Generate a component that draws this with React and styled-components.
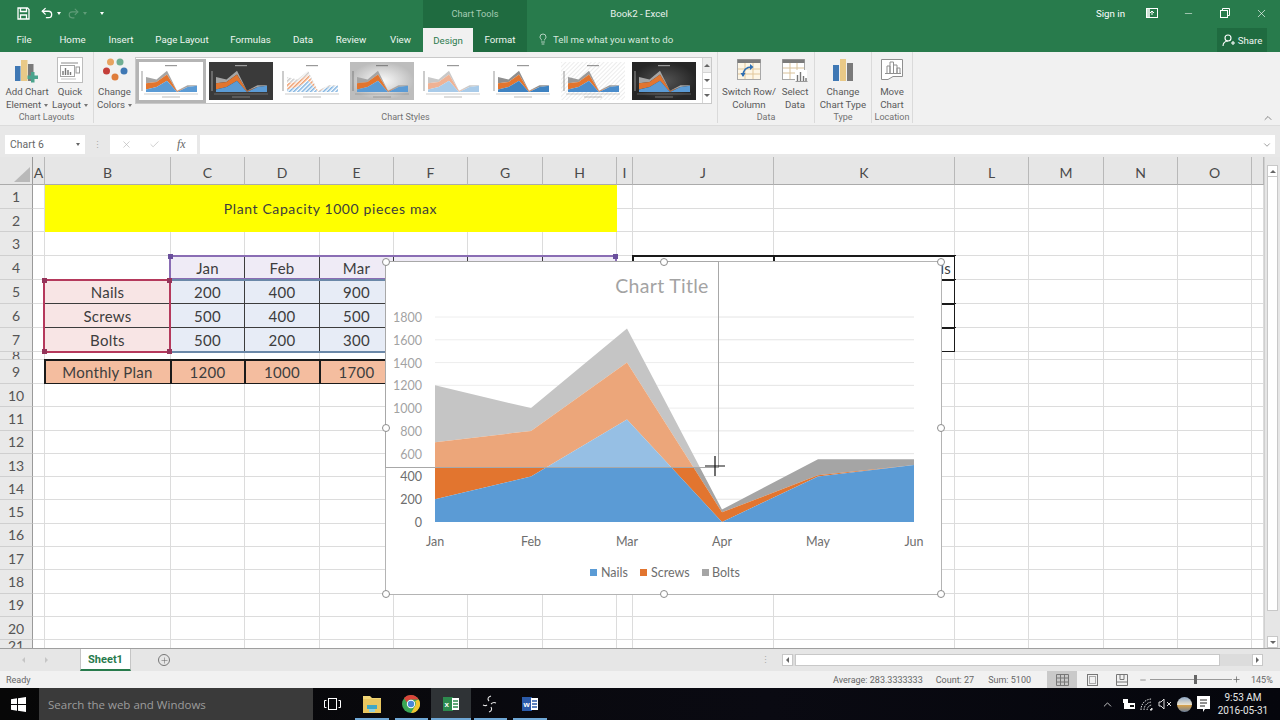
import React from "react";
import styled, { createGlobalStyle } from "styled-components";
import { Undo2, Redo2, Lightbulb, X, Check, Plus, ChevronUp, ChevronDown, Minus } from "lucide-react";

const UI = `Roboto, "Liberation Sans", sans-serif`;
const CELL = `Lato, "Liberation Sans", sans-serif`;

const COLS = [33, 12, 126, 74, 75, 74, 74, 75, 74, 16, 141, 181, 74, 75, 74, 74, 12];
const COL_NAMES = ["A", "B", "C", "D", "E", "F", "G", "H", "I", "J", "K", "L", "M", "N", "O", ""];
const ROWS = [24, 23, 24, 24, 24, 24, 24, 8, 24, 23.3, 23.3, 23.3, 23.3, 23.3, 23.3, 23.3, 23.3, 23.3, 23.3, 23.3];

const PINK = "#f8e5e5";
const BLUE = "#e7ecf6";
const LILAC = "#efebf6";
const PEACH = "#f4bd9f";

// cellen met inhoud, de rest is leeg
const CELLS = {
  C4: { text: "Jan", bg: LILAC, line: "thin" },
  D4: { text: "Feb", bg: LILAC, line: "thin" },
  E4: { text: "Mar", bg: LILAC, line: "thin" },
  F4: { bg: LILAC, line: "thin" },
  G4: { bg: LILAC, line: "thin" },
  H4: { bg: LILAC, line: "thin" },
  B5: { text: "Nails", bg: PINK, line: "thin" },
  B6: { text: "Screws", bg: PINK, line: "thin" },
  B7: { text: "Bolts", bg: PINK, line: "thin" },
  C5: { text: "200", bg: BLUE, line: "thin" },
  D5: { text: "400", bg: BLUE, line: "thin" },
  E5: { text: "900", bg: BLUE, line: "thin" },
  C6: { text: "500", bg: BLUE, line: "thin" },
  D6: { text: "400", bg: BLUE, line: "thin" },
  E6: { text: "500", bg: BLUE, line: "thin" },
  C7: { text: "500", bg: BLUE, line: "thin" },
  D7: { text: "200", bg: BLUE, line: "thin" },
  E7: { text: "300", bg: BLUE, line: "thin" },
  B9: { text: "Monthly Plan", bg: PEACH, line: "thick" },
  C9: { text: "1200", bg: PEACH, line: "thick" },
  D9: { text: "1000", bg: PEACH, line: "thick" },
  E9: { text: "1700", bg: PEACH, line: "thick" },
  F9: { bg: PEACH, line: "thick" },
  J4: { line: "thick" },
  K4: { text: "Totals", line: "thick", right: true },
  J5: { line: "thick" },
  K5: { line: "thick" },
  J6: { line: "thick" },
  K6: { line: "thick" },
  J7: { line: "thick" },
  K7: { line: "thick" },
};

const GlobalStyle = createGlobalStyle`
  html, body { margin: 0; padding: 0; background: #fff; }
  body { font-family: ${UI}; overflow: hidden; }
  * { box-sizing: border-box; }
`;

const Page = styled.div`
  width: 1280px;
  height: 720px;
  display: flex;
  flex-direction: column;
  overflow: hidden;
  position: relative;
  background: #fff;
`;

// ── titelbalk ─────────────────────────────
const TitleBar = styled.div`
  height: 26px;
  background: #287b4c;
  display: flex;
  align-items: center;
  color: #fff;
  font-size: 9.7px;
`;

const Qat = styled.div`
  width: 423px;
  display: flex;
  align-items: center;
  padding-left: 17px;
  gap: 0;
`;

const ToolsTab = styled.div`
  width: 104px;
  height: 100%;
  background: #1f6b40;
  color: #a6ccb4;
  display: flex;
  align-items: center;
  justify-content: center;
  font-size: 9.2px;
`;

const DocTitle = styled.div`
  width: 224px;
  text-align: center;
  color: #e8f2ec;
`;

const WinControls = styled.div`
  margin-left: auto;
  display: flex;
  align-items: center;
`;

const SignIn = styled.span`
  margin-right: 9px;
`;

const WinButton = styled.span`
  width: 36.5px;
  display: flex;
  justify-content: center;
  align-items: center;
`;

const Caret = styled.i`
  display: block;
  width: 0;
  height: 0;
  border-left: 2.5px solid transparent;
  border-right: 2.5px solid transparent;
  border-top: 3px solid ${(p) => p.$color || "#fff"};
  margin: ${(p) => p.$margin || "0"};
`;

// ── tabs ──────────────────────────────────
const TabRow = styled.div`
  height: 26px;
  background: #287b4c;
  display: flex;
  color: #eef6f1;
  font-size: 9.7px;
`;

const Tab = styled.div`
  width: ${(p) => p.$w}px;
  display: flex;
  align-items: center;
  justify-content: center;
  height: 100%;
`;

const ActiveTab = styled(Tab)`
  height: 24px;
  margin-top: 2px;
  background: #f1f1f1;
  color: #2b7a4d;
`;

const ToolTabs = styled.div`
  display: flex;
  width: 104px;
  background: #1f6b40;
`;

const TellMe = styled.div`
  display: flex;
  align-items: center;
  gap: 4px;
  padding-left: 10px;
  color: #d5e8dc;
`;

const ShareButton = styled.div`
  margin: 2px 13px 0 auto;
  width: 50px;
  background: #1f6b40;
  display: flex;
  align-items: center;
  justify-content: center;
  gap: 3px;
`;

// ── ribbon ────────────────────────────────
const Ribbon = styled.div`
  height: 74px;
  background: #f1f1f1;
  display: flex;
  border-bottom: 1px solid #dcdcdc;
  color: #555;
  position: relative;
`;

const Group = styled.div`
  width: ${(p) => p.$w}px;
  display: flex;
  flex-direction: column;
  border-right: 1px solid #dadada;
  margin-bottom: 2px;
`;

const GroupBody = styled.div`
  flex: 1;
  display: flex;
  padding: ${(p) => p.$pad || "5px 0 0"};
`;

const GroupLabel = styled.div`
  height: 13px;
  line-height: 13px;
  text-align: center;
  font-size: 9px;
  color: #717171;
`;

const RibbonBtn = styled.div`
  width: ${(p) => p.$w}px;
  display: flex;
  flex-direction: column;
  align-items: center;
`;

const BtnIcon = styled.div`
  height: 26px;
  display: flex;
  align-items: center;
  justify-content: center;
`;

const BtnLabel = styled.div`
  margin-top: 2px;
  font-size: 9.7px;
  line-height: 13px;
  text-align: center;
  white-space: nowrap;
  color: #5a5a5a;
`;

const BtnCaret = styled.span`
  display: inline-block;
  vertical-align: middle;
  margin-left: 3px;
`;

const Gallery = styled.div`
  width: 577px;
  height: 47px;
  background: #fff;
  border: 1px solid #c9c9c9;
  display: flex;
  align-items: center;
  padding-left: 3px;
  gap: 6.4px;
`;

const ThumbFrame = styled.div`
  width: 64px;
  height: 38px;
  flex: none;
  outline: ${(p) => (p.$selected ? "3px solid #b5b5b5" : "none")};
`;

const GalleryScroll = styled.div`
  margin-left: auto;
  width: 12px;
  height: 100%;
  display: flex;
  flex-direction: column;
  border-left: 1px solid #d5d5d5;
`;

const ScrollCell = styled.div`
  flex: 1;
  display: flex;
  align-items: center;
  justify-content: center;
  border-bottom: 1px solid #d5d5d5;
  background: ${(p) => (p.$off ? "#ececec" : "#fff")};
  &:last-child { border-bottom: 0; }
`;

const Collapse = styled.div`
  position: absolute;
  right: 6px;
  bottom: 1px;
  color: #666;
  display: flex;
`;

// ── formulebalk ───────────────────────────
const FormulaBar = styled.div`
  height: 31px;
  background: #e8e8e8;
  display: flex;
  align-items: flex-start;
  padding: 9px 5px 0;
  font-size: 10.4px;
  color: #666;
`;

const NameBox = styled.div`
  width: 80px;
  height: 19px;
  background: #fff;
  display: flex;
  align-items: center;
  justify-content: space-between;
  padding: 0 5px;
`;

const Dots = styled.div`
  width: 25px;
  height: 19px;
  display: flex;
  align-items: center;
  justify-content: center;
  color: #aaa;
  font-size: 9px;
`;

const FxBox = styled.div`
  width: 87px;
  height: 19px;
  background: #fff;
  display: flex;
  align-items: center;
  justify-content: space-around;
  padding: 0 3px;
  color: #b5b5b5;
`;

const Fx = styled.span`
  font-family: "Liberation Serif", serif;
  font-style: italic;
  color: #666;
  font-size: 12px;
`;

const FormulaInput = styled.div`
  margin-left: 3px;
  flex: 1;
  height: 19px;
  background: #fff;
  display: flex;
  align-items: center;
  justify-content: flex-end;
  padding-right: 3px;
`;

// ── werkblad ──────────────────────────────
const SheetArea = styled.div`
  height: 491px;
  position: relative;
  display: flex;
  overflow: hidden;
`;

const Grid = styled.div`
  width: 1264px;
  display: grid;
  grid-template-columns: ${(p) => p.$cols};
  grid-template-rows: ${(p) => p.$rows};
  overflow: hidden;
  font-family: ${CELL};
`;

const Corner = styled.div`
  background: #e6e6e6;
  border-right: 1px solid #9a9a9a;
  border-bottom: 1px solid #ababab;
  display: flex;
  align-items: flex-end;
  justify-content: flex-end;
  padding: 0 2px 2px 0;
`;

const ColHead = styled.div`
  background: #e6e6e6;
  border-right: 1px solid #b8b8b8;
  border-bottom: 1px solid #ababab;
  display: flex;
  align-items: center;
  justify-content: center;
  padding-top: 4px;
  font-size: 14px;
  color: #4a4a4a;
  overflow: hidden;
`;

const RowHead = styled.div`
  background: #e9e9e9;
  border-right: 1px solid #9a9a9a;
  border-bottom: 1px solid #cfcfcf;
  display: flex;
  align-items: center;
  justify-content: center;
  font-size: 14px;
  color: #555;
  overflow: hidden;
`;

const Cell = styled.div`
  background: ${(p) => p.$bg || "#fff"};
  border-right: 1px solid ${(p) => (p.$line === "thin" ? "#3c3c3c" : "#dcdcdc")};
  border-bottom: 1px solid ${(p) => (p.$line === "thin" ? "#3c3c3c" : "#dcdcdc")};
  outline: ${(p) => (p.$line === "thick" ? "2px solid #1a1a1a" : "none")};
  outline-offset: -1px;
  display: flex;
  align-items: center;
  justify-content: ${(p) => (p.$right ? "flex-end" : "center")};
  padding-right: ${(p) => (p.$right ? "3px" : "0")};
  font-size: 15px;
  letter-spacing: 0.25px;
  color: #3d3d3d;
  overflow: hidden;
  white-space: nowrap;
`;

const MergedTitle = styled(Cell)`
  grid-column: 3 / span 7;
  grid-row: 2 / span 2;
  margin-left: -1px;
  background: #ffff00;
  border: 0;
  font-size: 14px;
  letter-spacing: 0.6px;
  padding-bottom: 1px;
`;

// ── selectie en grafiek liggen over de cellen ──
const RangeBox = styled.div`
  position: absolute;
  left: ${(p) => p.$x}px;
  top: ${(p) => p.$y}px;
  width: ${(p) => p.$w}px;
  height: ${(p) => p.$h}px;
  border: 2px solid ${(p) => p.$color};
  pointer-events: none;
`;

const RangeDot = styled.i`
  position: absolute;
  width: 5px;
  height: 5px;
  background: ${(p) => p.$color};
  ${(p) => (p.$top ? "top: -3px;" : "bottom: -3px;")}
  ${(p) => (p.$left ? "left: -3px;" : "right: -3px;")}
`;

const ChartBox = styled.div`
  position: absolute;
  left: 385px;
  top: 104px;
  width: 557px;
  height: 334px;
  background: #fff;
  border: 1px solid #b4b4b4;
`;

const ChartSvg = styled.svg`
  display: block;
  font-family: ${CELL};
`;

const DragGhost = styled.div`
  position: absolute;
  left: -1px;
  top: -1px;
  width: 334px;
  height: 207px;
  background: rgba(255, 255, 255, 0.36);
  border: 1px solid #a8a8a8;
`;

const Handle = styled.i`
  position: absolute;
  width: 8px;
  height: 8px;
  border-radius: 50%;
  background: #fff;
  border: 1px solid #8c8c8c;
  left: ${(p) => p.$x}%;
  top: ${(p) => p.$y}%;
  transform: translate(-50%, -50%);
`;

const Crosshair = styled.svg`
  position: absolute;
  left: 319px;
  top: 194px;
`;

const VScroll = styled.div`
  width: 16px;
  background: #e6e6e6;
  display: flex;
  flex-direction: column;
  align-items: center;
  padding: 8px 0 0;
  border-left: 1px solid #d0d0d0;
`;

const ScrollArrow = styled.div`
  width: 11px;
  height: 12px;
  background: #fff;
  border: 1px solid #c8c8c8;
  display: flex;
  align-items: center;
  justify-content: center;
  flex: none;
`;

const VThumb = styled.div`
  width: 11px;
  height: 434px;
  background: #fff;
  border: 1px solid #c8c8c8;
  border-top: 0;
  margin-bottom: auto;
`;

const TriUp = styled.i`
  width: 0;
  height: 0;
  border-left: 3px solid transparent;
  border-right: 3px solid transparent;
  border-bottom: 3px solid #666;
`;

const TriDown = styled(TriUp)`
  border-bottom: 0;
  border-top: 3px solid #666;
`;

const TriLeft = styled.i`
  width: 0;
  height: 0;
  border-top: 3px solid transparent;
  border-bottom: 3px solid transparent;
  border-right: 3px solid ${(p) => p.$color || "#666"};
`;

const TriRight = styled.i`
  width: 0;
  height: 0;
  border-top: 3px solid transparent;
  border-bottom: 3px solid transparent;
  border-left: 3px solid ${(p) => p.$color || "#666"};
`;

// ── bladtabs ──────────────────────────────
const SheetBar = styled.div`
  height: 23px;
  background: #e6e6e6;
  border-top: 1px solid #9f9f9f;
  display: flex;
  align-items: center;
  font-size: 11px;
`;

const SheetNav = styled.div`
  width: 80px;
  display: flex;
  justify-content: center;
  gap: 20px;
  padding-right: 10px;
`;

const SheetTab = styled.div`
  width: 51px;
  height: 100%;
  background: #fff;
  border-bottom: 2px solid #287b4c;
  border-left: 1px solid #c5c5c5;
  border-right: 1px solid #c5c5c5;
  color: #287b4c;
  font-weight: 700;
  display: flex;
  align-items: center;
  justify-content: center;
`;

const AddSheet = styled.div`
  margin-left: 27px;
  width: 12px;
  height: 12px;
  border-radius: 50%;
  border: 1px solid #777;
  color: #666;
  display: flex;
  align-items: center;
  justify-content: center;
`;

const SplitDots = styled.span`
  margin-left: auto;
  color: #aaa;
  font-size: 9px;
`;

const HScroll = styled.div`
  margin-left: 12px;
  margin-right: 17px;
  width: 481px;
  height: 12px;
  display: flex;
  background: #dcdcdc;
`;

const HArrow = styled(ScrollArrow)`
  height: 12px;
`;

const HThumb = styled.div`
  width: 425px;
  margin-left: 2px;
  margin-right: auto;
  background: #fff;
  border: 1px solid #c8c8c8;
`;

// ── statusbalk ────────────────────────────
const StatusBar = styled.div`
  height: 17px;
  background: #f1f1f1;
  display: flex;
  align-items: center;
  padding-left: 6px;
  font-size: 9px;
  color: #666;
`;

const StatusRight = styled.div`
  margin-left: auto;
  display: flex;
  align-items: center;
  height: 100%;
`;

const StatusItem = styled.span`
  margin-right: ${(p) => p.$gap}px;
`;

const ViewBtn = styled.div`
  width: 30px;
  height: 100%;
  display: flex;
  align-items: center;
  justify-content: center;
  background: ${(p) => (p.$on ? "#c9c9c9" : "transparent")};
`;

const ZoomOut = styled.div`
  margin-left: 2px;
  display: flex;
`;

const ZoomTrack = styled.div`
  width: 82px;
  height: 1px;
  background: #9a9a9a;
  margin-left: 3px;
  position: relative;
`;

const ZoomThumb = styled.i`
  position: absolute;
  left: 44px;
  top: -4px;
  width: 3px;
  height: 9px;
  background: #666;
`;

const ZoomPct = styled.span`
  width: 32px;
  padding-left: 10px;
  margin-right: 7px;
`;

// ── taakbalk ──────────────────────────────
const Taskbar = styled.div`
  height: 32px;
  background: linear-gradient(90deg, #070707, #0a0a12 60%, #05060c);
  display: flex;
  align-items: center;
  color: #fff;
`;

const StartBtn = styled.div`
  width: 39px;
  display: flex;
  justify-content: center;
  padding-right: 2px;
`;

const SearchBox = styled.div`
  width: 274px;
  height: 100%;
  background: #3a3a3a;
  color: #9c9c9c;
  font-family: "Open Sans", sans-serif;
  font-size: 11.5px;
  display: flex;
  align-items: center;
  padding-left: 9px;
`;

const TaskIcon = styled.div`
  width: ${(p) => p.$w || 39.5}px;
  height: 100%;
  display: flex;
  align-items: center;
  justify-content: center;
  position: relative;
  background: ${(p) => (p.$active ? "#2f3336" : "transparent")};
  &::after {
    content: ${(p) => (p.$open ? '""' : "none")};
    position: absolute;
    left: ${(p) => (p.$active ? "0" : "3px")};
    right: ${(p) => (p.$active ? "0" : "3px")};
    bottom: 0;
    height: 2px;
    background: #6fa8d6;
  }
`;

const Tray = styled.div`
  margin-left: auto;
  display: flex;
  align-items: center;
  padding-right: 7px;
`;

const TrayItem = styled.div`
  width: ${(p) => p.$w}px;
  display: flex;
  justify-content: center;
`;

const Clock = styled.div`
  width: 60px;
  font-size: 10px;
  line-height: 13px;
  text-align: center;
  color: #e6e6e6;
`;

const DocLetter = styled.text`
  font-family: "Liberation Sans", sans-serif;
  font-weight: 700;
  font-size: 8px;
  fill: #fff;
`;

// ── grafiekdata ───────────────────────────
const XS = [49, 145, 241, 336, 432, 528];
const MONTHS = ["Jan", "Feb", "Mar", "Apr", "May", "Jun"];
const NAILS = [200, 400, 900, 0, 400, 500];
const SCREWS = [700, 800, 1400, 85, 410, 500];
const BOLTS = [1200, 1000, 1700, 110, 550, 550];
const TICKS = [0, 200, 400, 600, 800, 1000, 1200, 1400, 1600, 1800];
const toY = (v) => 260 - (v * 205) / 1800;

const areaPoints = (top, bottom, xs, y) =>
  [
    ...xs.map((x, i) => `${x},${y(top[i])}`),
    ...xs.map((x, i) => `${x},${y(bottom ? bottom[i] : 0)}`).reverse(),
  ].join(" ");

const MainChart = () => (
  <ChartSvg width="555" height="332" viewBox="0 0 555 332">
    <text x="276" y="31" textAnchor="middle" fontSize="19.5" fill="#707070" letterSpacing="0.3">
      Chart Title
    </text>
    {TICKS.map((t) => (
      <g key={t}>
        {t > 0 && <line x1="49" x2="528" y1={toY(t)} y2={toY(t)} stroke="#e4e4e4" />}
        <text x="36" y={toY(t) + 5} textAnchor="end" fontSize="12.5" fill="#6e6e6e">
          {t}
        </text>
      </g>
    ))}
    <polygon points={areaPoints(BOLTS, SCREWS, XS, toY)} fill="#a5a5a5" />
    <polygon points={areaPoints(SCREWS, NAILS, XS, toY)} fill="#e2752f" />
    <polygon points={areaPoints(NAILS, null, XS, toY)} fill="#5b9bd5" />
    {MONTHS.map((m, i) => (
      <text key={m} x={XS[i]} y="284" textAnchor="middle" fontSize="12.5" fill="#6e6e6e">
        {m}
      </text>
    ))}
    <rect x="204" y="307" width="7" height="7" fill="#5b9bd5" />
    <text x="215" y="315" fontSize="12.5" fill="#6e6e6e">Nails</text>
    <rect x="254" y="307" width="7" height="7" fill="#e2752f" />
    <text x="265" y="315" fontSize="12.5" fill="#6e6e6e">Screws</text>
    <rect x="316" y="307" width="7" height="7" fill="#a5a5a5" />
    <text x="326" y="315" fontSize="12.5" fill="#6e6e6e">Bolts</text>
  </ChartSvg>
);

// kleine voorbeelden in de galerij
const THUMB_XS = [7, 17.5, 28, 38, 48.5, 58];
const thumbY = (v) => 30 - v * 0.0125;

const THUMBS = [
  { bg: "#fff", colors: ["#5b9bd5", "#e2752f", "#a5a5a5"], selected: true },
  { bg: "#3a3a3a", colors: ["#5b9bd5", "#e2752f", "#a5a5a5"], ink: "#ddd" },
  { bg: "#fff", colors: ["url(#hatchB)", "url(#hatchO)", "url(#hatchG)"] },
  { bg: "url(#greyFade)", colors: ["#5b9bd5", "#e2752f", "#a5a5a5"] },
  { bg: "#fff", colors: ["#a9cbe9", "#efb294", "#c9c9c9"] },
  { bg: "#fff", colors: ["#3f83c2", "#e2752f", "#8f8f8f"] },
  { bg: "url(#hatchP)", colors: ["#4a8ccb", "#e2752f", "#9a9a9a"] },
  { bg: "url(#darkFade)", colors: ["#5b9bd5", "#e2752f", "#a5a5a5"], ink: "#ddd" },
];

const Thumb = ({ bg, colors, selected, ink = "#555" }) => (
  <ThumbFrame $selected={selected}>
    <svg width="64" height="38" viewBox="0 0 64 38">
      <defs>
        <pattern id="hatchB" width="3" height="3" patternUnits="userSpaceOnUse" patternTransform="rotate(45)">
          <rect width="3" height="3" fill="#fff" />
          <rect width="1.5" height="3" fill="#7eb2e0" />
        </pattern>
        <pattern id="hatchO" width="3" height="3" patternUnits="userSpaceOnUse" patternTransform="rotate(45)">
          <rect width="3" height="3" fill="#fff" />
          <rect width="1.5" height="3" fill="#ee9a68" />
        </pattern>
        <pattern id="hatchG" width="3" height="3" patternUnits="userSpaceOnUse" patternTransform="rotate(45)">
          <rect width="3" height="3" fill="#fff" />
          <rect width="1.5" height="3" fill="#c9c9c9" />
        </pattern>
        <pattern id="hatchP" width="3" height="3" patternUnits="userSpaceOnUse" patternTransform="rotate(45)">
          <rect width="3" height="3" fill="#fff" />
          <rect width="1" height="3" fill="#ececec" />
        </pattern>
        <radialGradient id="greyFade">
          <stop offset="0" stopColor="#fbfbfb" />
          <stop offset="1" stopColor="#bdbdbd" />
        </radialGradient>
        <radialGradient id="darkFade">
          <stop offset="0" stopColor="#555" />
          <stop offset="1" stopColor="#262626" />
        </radialGradient>
      </defs>
      <rect width="64" height="38" fill={bg} />
      <rect x="26" y="3" width="12" height="1.2" fill={ink} opacity="0.6" />
      <rect x="2" y="9" width="2" height="20" fill={ink} opacity="0.3" />
      <polygon points={areaPoints(BOLTS, SCREWS, THUMB_XS, thumbY)} fill={colors[2]} />
      <polygon points={areaPoints(SCREWS, NAILS, THUMB_XS, thumbY)} fill={colors[1]} />
      <polygon points={areaPoints(NAILS, null, THUMB_XS, thumbY)} fill={colors[0]} />
      <rect x="5" y="31.5" width="54" height="1" fill={ink} opacity="0.3" />
      <rect x="23" y="34.5" width="18" height="1" fill={ink} opacity="0.4" />
    </svg>
  </ThumbFrame>
);

// ── pictogrammen ──────────────────────────
const SaveIcon = () => (
  <svg width="13" height="13" viewBox="0 0 13 13" fill="none" stroke="#fff" strokeWidth="1.3">
    <path d="M1 1h9.5L12 2.5V12H1z" />
    <path d="M3.5 1v3.5h6V1M3.5 12V8h6v4" />
  </svg>
);

const AddChartIcon = () => (
  <svg width="26" height="26" viewBox="0 0 26 26">
    <rect x="1" y="9" width="5.5" height="15" fill="#3f78b4" />
    <rect x="7" y="3" width="6.5" height="21" fill="#e9c987" />
    <rect x="14" y="7" width="5.5" height="17" fill="#7a7a7a" />
    <path d="M17 15h3.5v3.5H24V22h-3.5v3.5H17V22h-3.5v-3.5H17z" fill="#4aa38d" />
  </svg>
);

const QuickLayoutIcon = () => (
  <svg width="26" height="26" viewBox="0 0 26 26" fill="none">
    <rect x="0.5" y="0.5" width="25" height="25" fill="#fff" stroke="#bdbdbd" />
    <path d="M4 6h17" stroke="#8a8a8a" />
    <rect x="3.5" y="8.5" width="14" height="11" stroke="#a5a5a5" />
    <path d="M6 18v-4M8.500 18v-7M11 18v-5M13.500 18v-3" stroke="#777" strokeWidth="1.4" />
    <rect x="19" y="10" width="3.500" height="6" stroke="#999" />
    <path d="M4 22h15" stroke="#c5c5c5" />
  </svg>
);

const ColorsIcon = () => (
  <svg width="26" height="26" viewBox="0 0 26 26">
    <circle cx="8.500" cy="5" r="3.500" fill="#e7a35f" />
    <circle cx="18" cy="5" r="3.500" fill="#6fae92" />
    <circle cx="4.500" cy="14" r="3.500" fill="#c43f3a" />
    <circle cx="22" cy="14" r="3.500" fill="#3f78b4" />
    <circle cx="13" cy="20" r="3.500" fill="#df7d3b" />
  </svg>
);

const SwitchIcon = () => (
  <svg width="26" height="26" viewBox="0 0 26 26" fill="none">
    <rect x="1.500" y="2.500" width="23" height="20" fill="#fdf6e6" stroke="#a8a8a8" />
    <rect x="1.500" y="2.500" width="23" height="3.500" fill="#7b7b7b" />
    <path d="M9 6v16M17 6v16M2 12h22M2 17h22" stroke="#e2c79a" />
    <path d="M7 19c0-6 3-9 9-9" stroke="#2f6fb3" strokeWidth="1.500" />
    <path d="M14 7l3.500 3-3.500 3zM4.500 16l2.500 4 2.500-4z" fill="#2f6fb3" />
  </svg>
);

const SelectDataIcon = () => (
  <svg width="26" height="26" viewBox="0 0 26 26" fill="none">
    <rect x="0.500" y="2.500" width="22" height="20" fill="#fff" stroke="#a8a8a8" />
    <rect x="0.500" y="2.500" width="22" height="3.500" fill="#7b7b7b" />
    <path d="M8 6v16M15 6v16M1 11h21M1 16h21" stroke="#d9c29a" />
    <rect x="13" y="13" width="12" height="12" fill="#fff" />
    <path d="M15.500 24v-6M18.500 24v-9M21.500 24v-5M24 24v-3" stroke="#777" strokeWidth="1.400" />
    <path d="M13.500 24.500h12" stroke="#999" />
  </svg>
);

const ChartTypeIcon = () => (
  <svg width="26" height="26" viewBox="0 0 26 26">
    <rect x="3" y="8" width="6" height="16" fill="#3f78b4" />
    <rect x="10" y="2" width="6" height="22" fill="#e9c987" />
    <rect x="17" y="6" width="6" height="18" fill="#7a7a7a" />
  </svg>
);

const MoveChartIcon = () => (
  <svg width="26" height="26" viewBox="0 0 26 26" fill="none" stroke="#8f8f8f">
    <path d="M9 22.500H2.500v-20h21v17H14l-5 3z" fill="#fff" />
    <path d="M8 16V9h3v7M11 16V5h3.500v11M14.500 16V8H18v8M18 16v-5h3v5" />
    <path d="M6 16.500h16" />
  </svg>
);

const WindowsLogo = () => (
  <svg width="15" height="15" viewBox="0 0 15 15" fill="#fff">
    <path d="M0 2.200l6-.9v5.800H0zM7 1.200L15 0v7.100H7zM0 8h6v5.700l-6-.9zM7 8h8v7l-8-1.200z" />
  </svg>
);

const TaskView = () => (
  <svg width="17" height="14" viewBox="0 0 17 14" fill="none" stroke="#fff">
    <rect x="4.500" y="1.500" width="8" height="11" />
    <path d="M2.500 3.500h-2v7h2M14.500 3.500h2v7h-2" />
  </svg>
);

const FolderIcon = () => (
  <svg width="18" height="18" viewBox="0 0 18 18">
    <path d="M0 1h7l2 2h9v15H0z" fill="#f1d677" />
    <rect x="0" y="4" width="18" height="14" fill="#e8c65f" />
    <rect x="4" y="10" width="10" height="4" fill="#3fa7c4" />
    <rect x="6" y="14" width="6" height="3" fill="#8fd0de" />
  </svg>
);

const ChromeIcon = () => (
  <svg width="18" height="18" viewBox="0 0 18 18">
    <circle cx="9" cy="9" r="9" fill="#3aa655" />
    <path d="M9 0a9 9 0 0 1 7.800 4.500H9A4.500 4.500 0 0 0 4.800 7.500L2 3a9 9 0 0 1 7-3z" fill="#d9453a" />
    <path d="M16.800 4.500A9 9 0 0 1 9 18l3.900-6.700A4.500 4.500 0 0 0 13 6z" fill="#f2c531" />
    <circle cx="9" cy="9" r="4.200" fill="#fff" />
    <circle cx="9" cy="9" r="3.200" fill="#4a86d8" />
  </svg>
);

const DocIcon = ({ main, light, letter }) => (
  <svg width="16" height="16" viewBox="0 0 16 16">
    <rect x="0" y="1" width="10" height="14" fill={main} />
    <rect x="9" y="2" width="7" height="12" fill="#fff" />
    <path d="M10 5h5M10 8h5M10 11h5" stroke={light} strokeWidth="1.400" />
    <DocLetter x="1.500" y="11">{letter}</DocLetter>
  </svg>
);

const SwirlIcon = () => (
  <svg width="16" height="18" viewBox="0 0 16 18" fill="none" stroke="#e8e8e8" strokeWidth="1.100">
    <path d="M9 1c-3 1-4 3-2 5" />
    <path d="M14 8c-2-1-3-1-5 1" />
    <path d="M7 17c3-1 3-3 2-5" />
    <path d="M1 10c2 1 3 1 4 0" />
  </svg>
);

const TrayBattery = () => (
  <svg width="13" height="11" viewBox="0 0 13 11">
    <rect x="0" y="0" width="5" height="4" fill="#fff" />
    <rect x="1" y="4" width="11" height="6" fill="#fff" />
    <rect x="7" y="6" width="4" height="2" fill="#111" />
  </svg>
);

const TrayWifi = () => (
  <svg width="13" height="13" viewBox="0 0 13 13" fill="none" stroke="#ddd">
    <path d="M1 12c0-6 4-11 11-11M4 12c0-4 3-8 8-8M7 12c0-2 2-5 5-5" strokeDasharray="1.500 1" />
    <path d="M10 12l2-2v2z" fill="#ddd" />
  </svg>
);

const TrayVolume = () => (
  <svg width="14" height="12" viewBox="0 0 14 12" fill="none" stroke="#ddd">
    <path d="M6 1L3 4H1v4h2l3 3z" />
    <path d="M9 4l4 4M13 4l-4 4" />
  </svg>
);

const TrayBall = () => (
  <svg width="15" height="15" viewBox="0 0 15 15">
    <defs>
      <linearGradient id="ball" x1="0" y1="0" x2="0" y2="1">
        <stop offset="0" stopColor="#8fa7c4" />
        <stop offset="0.5" stopColor="#e9e2cf" />
        <stop offset="0.55" stopColor="#d8a24a" />
        <stop offset="1" stopColor="#6a7f9c" />
      </linearGradient>
    </defs>
    <circle cx="7.500" cy="7.500" r="7.500" fill="url(#ball)" />
  </svg>
);

const TrayNote = () => (
  <svg width="13" height="16" viewBox="0 0 13 16">
    <path d="M0 0h13v13H8l-2 3v-3H0z" fill="#fff" />
    <path d="M3 4h7M3 7h7M3 10h5" stroke="#222" />
  </svg>
);

const ShareIcon = () => (
  <svg width="13" height="13" viewBox="0 0 13 13" fill="none" stroke="#fff" strokeWidth="1.100">
    <circle cx="6" cy="4" r="3" />
    <path d="M1 12c0-3 2-5 5-5M9 9h4M11 7v4" />
  </svg>
);

const NormalViewIcon = () => (
  <svg width="13" height="12" viewBox="0 0 13 12" fill="none" stroke="#777">
    <path d="M.5.500h12v11H.5zM.5 4h12M.5 8h12M4.500.500v11M8.500.500v11" />
  </svg>
);

const PageViewIcon = () => (
  <svg width="11" height="12" viewBox="0 0 11 12" fill="none" stroke="#777">
    <rect x="0.500" y="0.500" width="10" height="11" />
    <rect x="2.500" y="2.500" width="6" height="7" stroke="#aaa" />
  </svg>
);

const BreakViewIcon = () => (
  <svg width="12" height="12" viewBox="0 0 12 12" fill="none" stroke="#777">
    <path d="M.5.500h11v11H.5zM4 .500v5h4v-5M.5 8h11" />
  </svg>
);

const RestoreIcon = () => (
  <svg width="10" height="10" viewBox="0 0 10 10" fill="none" stroke="#fff">
    <rect x="0.500" y="2.500" width="7" height="7" />
    <path d="M2.500 2.500v-2h7v7h-2" />
  </svg>
);

const DisplayIcon = () => (
  <svg width="12" height="10" viewBox="0 0 12 10" fill="none" stroke="#fff">
    <rect x="0.500" y="0.500" width="11" height="9" />
    <path d="M6 7V3M4 5l2-2 2 2" />
    <path d="M1 1h3v8H1z" fill="#cfe3d7" stroke="none" />
  </svg>
);

const rowKeys = ROWS.map((_, i) => i + 1);

const SheetGrid = () => {
  const cols = COLS.map((w) => `${w}px`).join(" ");
  const rows = ["28px", ...ROWS.map((h) => `${h}px`), "12px"].join(" ");
  return (
    <Grid $cols={cols} $rows={rows}>
      <Corner>
        <svg width="16" height="15" viewBox="0 0 16 15">
          <path d="M16 0v15H0z" fill="#b9b9b9" />
        </svg>
      </Corner>
      {COL_NAMES.map((c, i) => (
        <ColHead key={i}>{c}</ColHead>
      ))}
      <MergedTitle>Plant Capacity 1000 pieces max</MergedTitle>
      {[...rowKeys, 21].map((r) => (
        <React.Fragment key={r}>
          <RowHead>{r}</RowHead>
          {COL_NAMES.map((c, i) => {
            if ((r === 1 || r === 2) && i >= 1 && i <= 7) return null;
            const info = CELLS[`${c}${r}`] || {};
            return (
              <Cell key={i} $bg={info.bg} $line={info.line} $right={info.right}>
                {info.text}
              </Cell>
            );
          })}
        </React.Fragment>
      ))}
    </Grid>
  );
};

const App = () => (
  <Page>
    <GlobalStyle />
    <TitleBar>
      <Qat>
        <SaveIcon />
        <Undo2 size={14} strokeWidth={2.2} color="#fff" style={{ marginLeft: 10 }} />
        <Caret $margin="0 0 0 3px" />
        <Redo2 size={13} strokeWidth={2} color="#5f9c78" style={{ marginLeft: 6 }} />
        <Caret $color="#5f9c78" $margin="0 0 0 3px" />
        <Caret $margin="1px 0 0 13px" />
      </Qat>
      <ToolsTab>Chart Tools</ToolsTab>
      <DocTitle>Book2 - Excel</DocTitle>
      <WinControls>
        <SignIn>Sign in</SignIn>
        <WinButton><DisplayIcon /></WinButton>
        <WinButton><Minus size={11} strokeWidth={1.2} color="#fff" /></WinButton>
        <WinButton><RestoreIcon /></WinButton>
        <WinButton><X size={13} strokeWidth={1.2} color="#fff" /></WinButton>
      </WinControls>
    </TitleBar>

    <TabRow>
      <Tab $w={48}>File</Tab>
      <Tab $w={49}>Home</Tab>
      <Tab $w={48}>Insert</Tab>
      <Tab $w={74}>Page Layout</Tab>
      <Tab $w={63}>Formulas</Tab>
      <Tab $w={42}>Data</Tab>
      <Tab $w={54}>Review</Tab>
      <Tab $w={45}>View</Tab>
      <ToolTabs>
        <ActiveTab $w={50}>Design</ActiveTab>
        <Tab $w={54}>Format</Tab>
      </ToolTabs>
      <TellMe>
        <Lightbulb size={12} strokeWidth={1.3} color="#fff" />
        Tell me what you want to do
      </TellMe>
      <ShareButton>
        <ShareIcon />
        Share
      </ShareButton>
    </TabRow>

    <Ribbon>
      <Group $w={94}>
        <GroupBody>
          <RibbonBtn $w={54}>
            <BtnIcon><AddChartIcon /></BtnIcon>
            <BtnLabel>
              Add Chart<br />Element
              <BtnCaret><Caret $color="#777" /></BtnCaret>
            </BtnLabel>
          </RibbonBtn>
          <RibbonBtn $w={32}>
            <BtnIcon><QuickLayoutIcon /></BtnIcon>
            <BtnLabel>
              Quick<br />Layout
              <BtnCaret><Caret $color="#777" /></BtnCaret>
            </BtnLabel>
          </RibbonBtn>
        </GroupBody>
        <GroupLabel>Chart Layouts</GroupLabel>
      </Group>
      <Group $w={624}>
        <GroupBody>
          <RibbonBtn $w={41}>
            <BtnIcon><ColorsIcon /></BtnIcon>
            <BtnLabel>
              Change<br />Colors
              <BtnCaret><Caret $color="#777" /></BtnCaret>
            </BtnLabel>
          </RibbonBtn>
          <Gallery>
            {THUMBS.map((t, i) => (
              <Thumb key={i} {...t} />
            ))}
            <GalleryScroll>
              <ScrollCell $off><TriUp /></ScrollCell>
              <ScrollCell><TriDown /></ScrollCell>
              <ScrollCell><TriDown /></ScrollCell>
            </GalleryScroll>
          </Gallery>
        </GroupBody>
        <GroupLabel>Chart Styles</GroupLabel>
      </Group>
      <Group $w={97}>
        <GroupBody $pad="5px 0 0 2px">
          <RibbonBtn $w={58}>
            <BtnIcon><SwitchIcon /></BtnIcon>
            <BtnLabel>Switch Row/<br />Column</BtnLabel>
          </RibbonBtn>
          <RibbonBtn $w={34}>
            <BtnIcon><SelectDataIcon /></BtnIcon>
            <BtnLabel>Select<br />Data</BtnLabel>
          </RibbonBtn>
        </GroupBody>
        <GroupLabel>Data</GroupLabel>
      </Group>
      <Group $w={57}>
        <GroupBody>
          <RibbonBtn $w={56}>
            <BtnIcon><ChartTypeIcon /></BtnIcon>
            <BtnLabel>Change<br />Chart Type</BtnLabel>
          </RibbonBtn>
        </GroupBody>
        <GroupLabel>Type</GroupLabel>
      </Group>
      <Group $w={41}>
        <GroupBody>
          <RibbonBtn $w={40}>
            <BtnIcon><MoveChartIcon /></BtnIcon>
            <BtnLabel>Move<br />Chart</BtnLabel>
          </RibbonBtn>
        </GroupBody>
        <GroupLabel>Location</GroupLabel>
      </Group>
      <Collapse><ChevronUp size={12} strokeWidth={1.5} /></Collapse>
    </Ribbon>

    <FormulaBar>
      <NameBox>
        Chart 6
        <Caret $color="#666" />
      </NameBox>
      <Dots>⋮</Dots>
      <FxBox>
        <X size={11} strokeWidth={1.4} />
        <Check size={11} strokeWidth={1.4} />
        <Fx>fx</Fx>
      </FxBox>
      <FormulaInput>
        <ChevronDown size={10} strokeWidth={1.5} />
      </FormulaInput>
    </FormulaBar>

    <SheetArea>
      <SheetGrid />
      <VScroll>
        <ScrollArrow><TriUp /></ScrollArrow>
        <VThumb />
        <ScrollArrow><TriDown /></ScrollArrow>
      </VScroll>

      <RangeBox $x={169} $y={98} $w={448} $h={25} $color="#8a6db4">
        <RangeDot $color="#6a4f9c" $top $left />
        <RangeDot $color="#6a4f9c" $top />
      </RangeBox>
      <RangeBox $x={169} $y={122} $w={448} $h={74} $color="#6b88a8" />
      <RangeBox $x={43} $y={122} $w={128} $h={74} $color="#b5395c">
        <RangeDot $color="#94345a" $top $left />
        <RangeDot $color="#94345a" $top />
        <RangeDot $color="#94345a" $left />
        <RangeDot $color="#94345a" />
      </RangeBox>

      <ChartBox>
        <MainChart />
        <DragGhost />
        <Handle $x={0} $y={0} />
        <Handle $x={50} $y={0} />
        <Handle $x={100} $y={0} />
        <Handle $x={0} $y={50} />
        <Handle $x={100} $y={50} />
        <Handle $x={0} $y={100} />
        <Handle $x={50} $y={100} />
        <Handle $x={100} $y={100} />
        <Crosshair width="20" height="20" viewBox="0 0 20 20">
          <path d="M10 0v20M0 10h20" stroke="#111" strokeWidth="1.2" />
        </Crosshair>
      </ChartBox>
    </SheetArea>

    <SheetBar>
      <SheetNav>
        <TriLeft $color="#c5c5c5" />
        <TriRight $color="#c5c5c5" />
      </SheetNav>
      <SheetTab>Sheet1</SheetTab>
      <AddSheet><Plus size={9} strokeWidth={1.4} /></AddSheet>
      <SplitDots>⋮</SplitDots>
      <HScroll>
        <HArrow><TriLeft /></HArrow>
        <HThumb />
        <HArrow><TriRight /></HArrow>
      </HScroll>
    </SheetBar>

    <StatusBar>
      Ready
      <StatusRight>
        <StatusItem $gap={13}>Average: 283.3333333</StatusItem>
        <StatusItem $gap={14}>Count: 27</StatusItem>
        <StatusItem $gap={16}>Sum: 5100</StatusItem>
        <ViewBtn $on><NormalViewIcon /></ViewBtn>
        <ViewBtn><PageViewIcon /></ViewBtn>
        <ViewBtn><BreakViewIcon /></ViewBtn>
        <ZoomOut><Minus size={8} strokeWidth={2} color="#666" /></ZoomOut>
        <ZoomTrack><ZoomThumb /></ZoomTrack>
        <Plus size={9} strokeWidth={2} color="#666" />
        <ZoomPct>145%</ZoomPct>
      </StatusRight>
    </StatusBar>

    <Taskbar>
      <StartBtn><WindowsLogo /></StartBtn>
      <SearchBox>Search the web and Windows</SearchBox>
      <TaskIcon $w={39}><TaskView /></TaskIcon>
      <TaskIcon $open><FolderIcon /></TaskIcon>
      <TaskIcon $open><ChromeIcon /></TaskIcon>
      <TaskIcon $open $active><DocIcon main="#2d8a4e" light="#2d8a4e" letter="x" /></TaskIcon>
      <TaskIcon $open><SwirlIcon /></TaskIcon>
      <TaskIcon $open><DocIcon main="#2b5aa8" light="#2b5aa8" letter="w" /></TaskIcon>
      <Tray>
        <TrayItem $w={24}><ChevronUp size={13} strokeWidth={1.6} color="#ddd" /></TrayItem>
        <TrayItem $w={20}><TrayBattery /></TrayItem>
        <TrayItem $w={15}><TrayWifi /></TrayItem>
        <TrayItem $w={21}><TrayVolume /></TrayItem>
        <TrayItem $w={18}><TrayBall /></TrayItem>
        <TrayItem $w={20}><TrayNote /></TrayItem>
        <Clock>9:53 AM<br />2016-05-31</Clock>
      </Tray>
    </Taskbar>
  </Page>
);

export default App;
